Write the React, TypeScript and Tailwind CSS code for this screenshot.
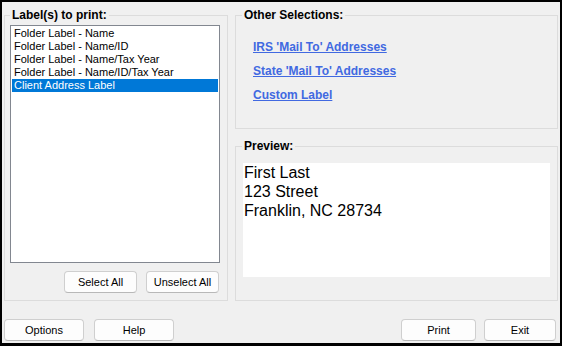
const labels = [
  "Folder Label - Name",
  "Folder Label - Name/ID",
  "Folder Label - Name/Tax Year",
  "Folder Label - Name/ID/Tax Year",
  "Client Address Label",
];

const links = ["IRS 'Mail To' Addresses", "State 'Mail To' Addresses", "Custom Label"];

function Button({ label, className }: { label: string; className: string }) {
  return (
    <button
      className={`h-[22px] rounded-[4px] border border-[#cfcfcf] border-b-[#b8b8b8] bg-[#fdfdfd] text-[11px] leading-[20px] text-black ${className}`}
    >
      {label}
    </button>
  );
}

export default function App() {
  const selected = 4;

  return (
    <div className="w-[562px] h-[346px] bg-[#f0f0f0] border-black border-t-2 border-x-2 border-b-[3px] flex flex-col font-['Liberation_Sans',Arial,sans-serif] text-black">
      {/* group boxes */}
      <div className="flex pt-[6px] pl-[2px]">
        <fieldset className="w-[224px] h-[293px] border border-[#dcdcdc] p-0">
          <legend className="ml-[5px] px-[2px] text-[12px] font-bold leading-[14px]">
            Label(s) to print:
          </legend>
          <div className="pl-[5px] pr-[7px]">
            <div className="mt-[3px] h-[238px] border border-[#828790] bg-white p-[1px]">
              {labels.map((l, i) => (
                <div
                  key={l}
                  className={`h-[13px] pl-[2px] text-[11px] leading-[13px] whitespace-nowrap ${
                    i === selected ? "bg-[#0078d7] text-white" : ""
                  }`}
                >
                  {l}
                </div>
              ))}
            </div>
            <div className="mt-[8px] flex justify-end gap-[9px] pr-[1px]">
              <Button label="Select All" className="w-[73px]" />
              <Button label="Unselect All" className="w-[73px]" />
            </div>
          </div>
        </fieldset>

        <div className="ml-[7px] w-[323px] flex flex-col">
          <fieldset className="h-[121px] border border-[#dcdcdc] p-0">
            <legend className="ml-[6px] px-[2px] text-[12px] font-bold leading-[14px]">
              Other Selections:
            </legend>
            <div className="mt-[18px] pl-[17px] flex flex-col items-start gap-[10px]">
              {links.map((l) => (
                <a
                  key={l}
                  href="#"
                  className="text-[12px] font-bold leading-[14px] text-[#4169e1] underline"
                >
                  {l}
                </a>
              ))}
            </div>
          </fieldset>

          <fieldset className="mt-[10px] h-[162px] border border-[#dcdcdc] p-0">
            <legend className="ml-[6px] px-[2px] text-[12px] font-bold leading-[14px]">
              Preview:
            </legend>
            <div className="mt-[10px] mx-[7px] h-[114px] bg-white pl-[1px] text-[16px] leading-[19px]">
              <div>First Last</div>
              <div>123 Street</div>
              <div>Franklin, NC 28734</div>
            </div>
          </fieldset>
        </div>
      </div>

      {/* bottom buttons */}
      <div className="mt-[18px] flex pl-[2px] pr-[4px]">
        <Button label="Options" className="w-[80px]" />
        <Button label="Help" className="ml-[10px] w-[80px]" />
        <div className="flex-1" />
        <Button label="Print" className="w-[75px]" />
        <Button label="Exit" className="ml-[8px] w-[72px]" />
      </div>
    </div>
  );
}
